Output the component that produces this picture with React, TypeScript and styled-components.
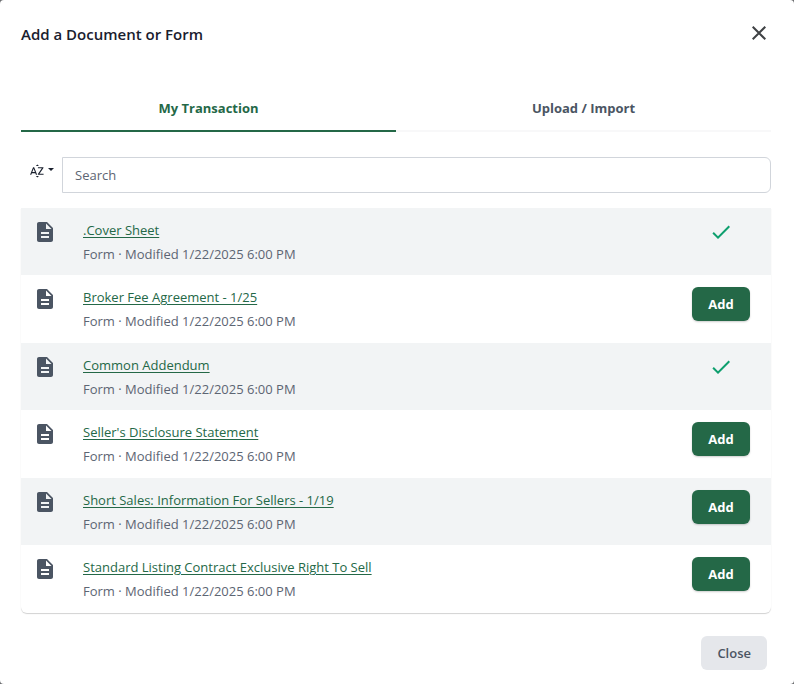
import React, { useState } from "react";
import styled, { createGlobalStyle } from "styled-components";

const GlobalStyle = createGlobalStyle`
  *, *::before, *::after { box-sizing: border-box; }
  html, body, #root { height: 100%; }
  body {
    margin: 0;
    background: #6b6d70;
    color: #1a202e;
    font-family: "Open Sans", "Noto Sans", sans-serif;
    font-size: 13px;
    line-height: 20px;
  }
  button, input { font: inherit; }
  button { cursor: pointer; }
`;

const Dialog = styled.section`
  display: flex;
  flex-direction: column;
  min-height: 100%;
  padding: 20px 23px 14px 21px;
  background: #fff;
  border-radius: 4px;
`;

const Header = styled.header`
  display: flex;
  align-items: flex-start;
  justify-content: space-between;
  height: 28px;
`;

const Title = styled.h1`
  margin: 0;
  font-size: 15px;
  line-height: 28px;
  font-weight: 600;
`;

const IconButton = styled.button`
  display: flex;
  align-items: center;
  justify-content: center;
  width: 24px;
  height: 26px;
  padding: 0;
  border: 0;
  background: none;
  color: #3f4245;
`;

const Tabs = styled.div`
  display: flex;
  margin-top: 36px;
`;

const Tab = styled.button<{ $active: boolean }>`
  flex: 1;
  height: 48px;
  padding: 2px 0 0;
  border: 0;
  border-bottom: 2px solid ${(p) => (p.$active ? "#246847" : "#f8f8f9")};
  background: none;
  color: ${(p) => (p.$active ? "#246847" : "#4b5563")};
  font-weight: 700;
`;

const Toolbar = styled.div`
  display: flex;
  align-items: flex-start;
  margin: 25px 0 15px;
`;

const SortButton = styled.button`
  display: flex;
  align-items: center;
  gap: 3px;
  width: 41px;
  height: 28px;
  padding: 0 8px;
  border: 0;
  background: none;
  color: #1a202e;
`;

const Caret = styled.svg`
  flex: none;
  margin-bottom: 3px;
`;

const SearchInput = styled.input`
  flex: 1;
  min-width: 0;
  height: 36px;
  padding: 0 12px;
  border: 1px solid #d1d5db;
  border-radius: 0 6px 6px 0;
  background: #fff;
  color: #1a202e;
  &::placeholder { color: #5d6573; opacity: 1; }
`;

const List = styled.ul`
  margin: 0;
  padding: 0;
  list-style: none;
  border-radius: 0 0 6px 6px;
  box-shadow: 0 1px 1px rgba(0, 0, 0, 0.18);
`;

const Row = styled.li`
  display: flex;
  align-items: flex-start;
  height: 68px;
  padding: 12px 21px 0 12px;
  &:nth-child(odd) { height: 67px; background: #f2f4f5; }
`;

const FileIcon = styled.svg`
  flex: none;
  width: 24px;
  height: 24px;
  fill: #4b5563;
`;

const Details = styled.div`
  flex: 1;
  min-width: 0;
  padding-left: 26px;
`;

const FormLink = styled.a`
  display: block;
  width: fit-content;
  color: #246847;
  text-underline-offset: 2px;
`;

const Meta = styled.p`
  margin: 4px 0 0;
  color: #5d6573;
`;

const Action = styled.div`
  display: flex;
  justify-content: center;
  width: 58px;
`;

const Button = styled.button<{ $primary?: boolean }>`
  height: 34px;
  padding: 0 16px;
  border: 0;
  border-radius: 6px;
  background: ${(p) => (p.$primary ? "#246847" : "#e5e7eb")};
  color: ${(p) => (p.$primary ? "#fff" : "#4b5563")};
  font-weight: ${(p) => (p.$primary ? 700 : 600)};
  box-shadow: ${(p) => (p.$primary ? "0 1px 2px rgba(0, 0, 0, 0.2)" : "none")};
`;

const Footer = styled.footer`
  display: flex;
  justify-content: flex-end;
  padding: 23px 4px 0 0;
`;

const documents = [
  { name: ".Cover Sheet", added: true },
  { name: "Broker Fee Agreement - 1/25", added: false },
  { name: "Common Addendum", added: true },
  { name: "Seller's Disclosure Statement", added: false },
  { name: "Short Sales: Information For Sellers - 1/19", added: false },
  { name: "Standard Listing Contract Exclusive Right To Sell", added: false },
];

const tabs = ["My Transaction", "Upload / Import"];

export default function App() {
  const [active, setActive] = useState(tabs[0]);
  return (
    <>
      <GlobalStyle />
      <Dialog role="dialog" aria-labelledby="dialog-title">
        <Header>
          <Title id="dialog-title">Add a Document or Form</Title>
          <IconButton type="button" aria-label="Close dialog">
            <svg width="14" height="14" viewBox="0 0 14 14" fill="none" stroke="currentColor" strokeWidth="2">
              <path d="M.7.7l12.6 12.6M13.3.7L.7 13.3" />
            </svg>
          </IconButton>
        </Header>
        <Tabs role="tablist">
          {tabs.map((t) => (
            <Tab key={t} type="button" role="tab" aria-selected={t === active} $active={t === active} onClick={() => setActive(t)}>
              {t}
            </Tab>
          ))}
        </Tabs>
        <Toolbar>
          <SortButton type="button" aria-label="Sort by name">
            <svg width="16" height="16" viewBox="0 0 24 24" fill="currentColor">
              <path d="M14.94 4.66h-4.72l2.36-2.36 2.36 2.36zm-4.69 14.71h4.66l-2.33 2.33-2.33-2.33zM6.1 6.27L1.6 17.73h1.84l.92-2.45h5.11l.92 2.45h1.84L7.74 6.27H6.1zm-1.13 7.37l1.94-5.18 1.94 5.18H4.97zm10.76 2.5h6.12v1.59h-8.53v-1.29l5.92-8.56h-5.88v-1.6h8.3v1.26l-5.93 8.6z" />
            </svg>
            <Caret width="6" height="3" viewBox="0 0 6 3" fill="currentColor"><path d="M0 0h6L3 3z" /></Caret>
          </SortButton>
          <SearchInput type="search" aria-label="Search" placeholder="Search" />
        </Toolbar>
        <List>
          {documents.map((d) => (
            <Row key={d.name}>
              <FileIcon viewBox="0 0 24 24" aria-hidden="true">
                <path d="M14 2H6c-1.1 0-1.99.9-1.99 2L4 20c0 1.1.89 2 1.99 2H18c1.1 0 2-.9 2-2V8l-6-6zm2 16H8v-2h8v2zm0-4H8v-2h8v2zm-3-5V3.500L18.500 9H13z" />
              </FileIcon>
              <Details>
                <FormLink href="#">{d.name}</FormLink>
                <Meta>Form · Modified 1/22/2025 6:00 PM</Meta>
              </Details>
              <Action>
                {d.added ? (
                  <svg width="24" height="24" viewBox="0 0 24 24" fill="#0e9f6e" role="img" aria-label="Added">
                    <path d="M9 16.170L4.830 12l-1.420 1.410L9 19 21 7l-1.410-1.410z" />
                  </svg>
                ) : (
                  <Button type="button" $primary>Add</Button>
                )}
              </Action>
            </Row>
          ))}
        </List>
        <Footer>
          <Button type="button">Close</Button>
        </Footer>
      </Dialog>
    </>
  );
}
